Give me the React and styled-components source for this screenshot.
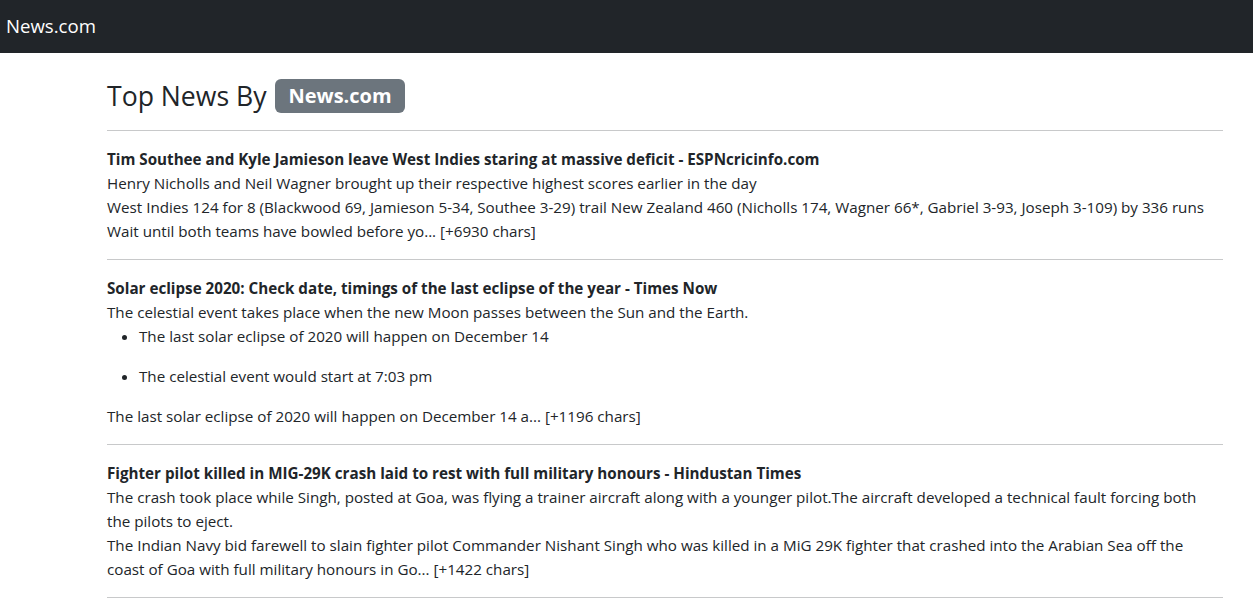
import React from "react";
import styled, { createGlobalStyle } from "styled-components";

const Global = createGlobalStyle`
  html, body { margin: 0; padding: 0; background: #fff; }
  body {
    font-family: "Open Sans", "Noto Sans", "Liberation Sans", sans-serif;
    font-size: 15.2px;
    line-height: 24px;
    color: #212529;
  }
  * { box-sizing: border-box; }
`;

const Navbar = styled.nav`
  background: #212529;
  height: 53px;
  display: flex;
  align-items: center;
  padding: 0 6px;
`;

const Brand = styled.a`
  color: #fff;
  font-size: 18.6px;
  line-height: 30px;
  text-decoration: none;
  margin-top: -1px;
`;

const Container = styled.main`
  padding: 26px 30px 0 107px;
`;

const Heading = styled.h2`
  margin: 0 0 17px;
  height: 34px;
  font-size: 26.6px;
  line-height: 34px;
  font-weight: 400;
  display: flex;
  align-items: center;
  gap: 9px;
`;

const Badge = styled.span`
  background: #6c757d;
  color: #fff;
  font-size: 20px;
  font-weight: 700;
  line-height: 20px;
  padding: 7px 13px;
  border-radius: 6px;
`;

const Rule = styled.hr`
  border: 0;
  border-top: 1px solid #c8c9ca;
  margin: 16px 0;
  height: 0;
`;

const Article = styled.article`
  display: flex;
  flex-direction: column;
`;

const Title = styled.b`
  font-weight: 700;
`;

const Line = styled.span``;

const List = styled.ul`
  margin: 0;
  padding-left: 32px;
`;

const Item = styled.li`
  margin-bottom: 16px;
`;

const news = [
  {
    title:
      "Tim Southee and Kyle Jamieson leave West Indies staring at massive deficit - ESPNcricinfo.com",
    desc: "Henry Nicholls and Neil Wagner brought up their respective highest scores earlier in the day",
    content: [
      "West Indies 124 for 8 (Blackwood 69, Jamieson 5-34, Southee 3-29) trail New Zealand 460 (Nicholls 174, Wagner 66*, Gabriel 3-93, Joseph 3-109) by 336 runs",
      "Wait until both teams have bowled before yo... [+6930 chars]",
    ],
  },
  {
    title:
      "Solar eclipse 2020: Check date, timings of the last eclipse of the year - Times Now",
    desc: "The celestial event takes place when the new Moon passes between the Sun and the Earth.",
    bullets: [
      "The last solar eclipse of 2020 will happen on December 14",
      "The celestial event would start at 7:03 pm",
    ],
    content: [
      "The last solar eclipse of 2020 will happen on December 14 a... [+1196 chars]",
    ],
  },
  {
    title:
      "Fighter pilot killed in MIG-29K crash laid to rest with full military honours - Hindustan Times",
    desc: "The crash took place while Singh, posted at Goa, was flying a trainer aircraft along with a younger pilot.The aircraft developed a technical fault forcing both the pilots to eject.",
    content: [
      "The Indian Navy bid farewell to slain fighter pilot Commander Nishant Singh who was killed in a MiG 29K fighter that crashed into the Arabian Sea off the coast of Goa with full military honours in Go... [+1422 chars]",
    ],
  },
];

export default function App() {
  return (
    <>
      <Global />
      <Navbar>
        <Brand href="#">News.com</Brand>
      </Navbar>
      <Container>
        <Heading>
          Top News By <Badge>News.com</Badge>
        </Heading>
        <Rule />
        {news.map((n, i) => (
          <React.Fragment key={i}>
            <Article>
              <Title>{n.title}</Title>
              <Line>{n.desc}</Line>
              {n.bullets && (
                <List>
                  {n.bullets.map((b, j) => (
                    <Item key={j}>{b}</Item>
                  ))}
                </List>
              )}
              {n.content.map((c, j) => (
                <Line key={j}>{c}</Line>
              ))}
            </Article>
            <Rule />
          </React.Fragment>
        ))}
      </Container>
    </>
  );
}
